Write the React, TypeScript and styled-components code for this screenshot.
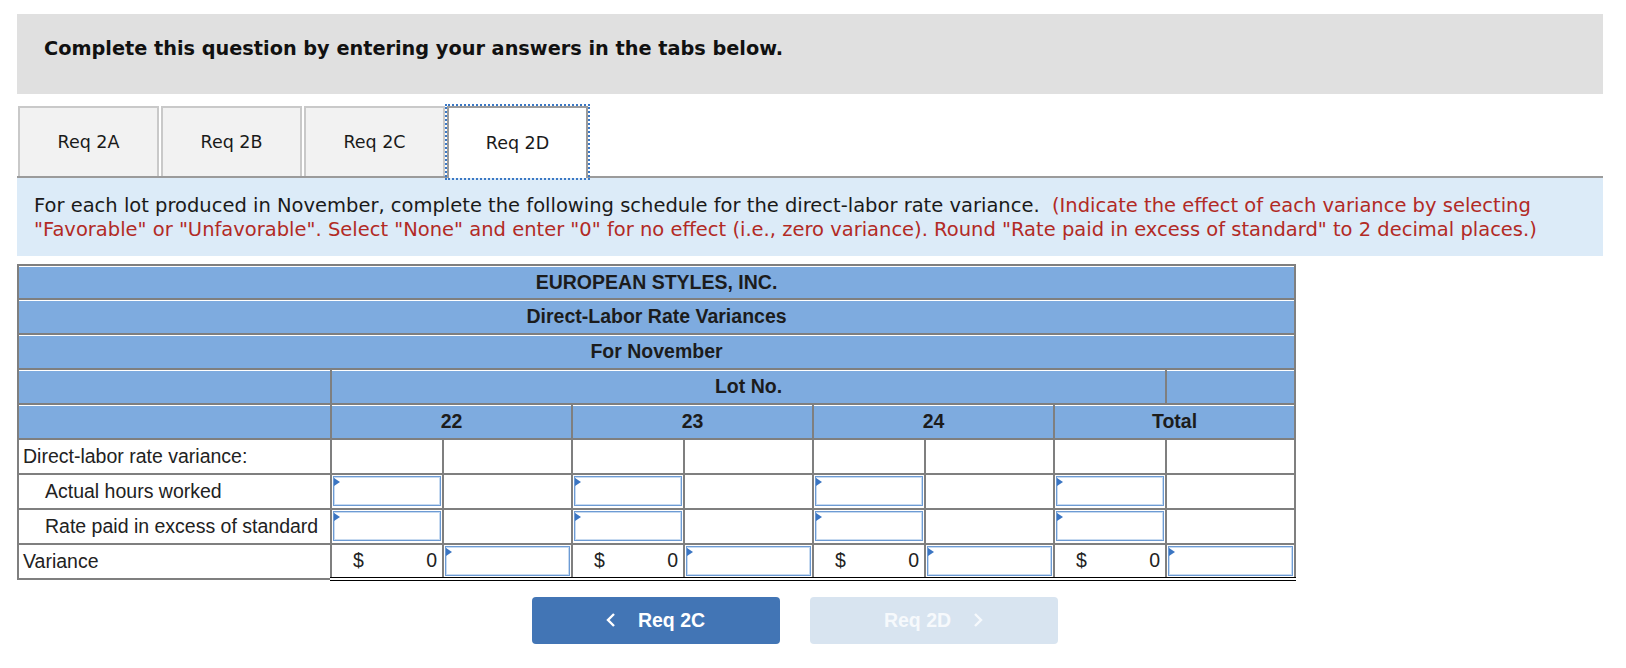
import React from 'react'
import styled, { createGlobalStyle } from 'styled-components'

const GlobalStyle = createGlobalStyle`
  body {
    margin: 0;
    background: #fff;
  }
`

const Page = styled.div`
  width: 1586px;
  padding: 14px 0 20px 17px;
  font-family: 'DejaVu Sans', Verdana, sans-serif;
  color: #1a1a1a;
`

const Banner = styled.div`
  height: 80px;
  box-sizing: border-box;
  background: #e0e0e0;
  padding: 23px 0 0 27px;
  font-size: 19.3px;
  line-height: 23px;
  font-weight: bold;
  color: #111;
`

const TabBar = styled.div`
  display: flex;
  align-items: flex-end;
  gap: 2px;
  margin-top: 12px;
  padding-left: 1px;
  border-bottom: 2px solid #9b9b9b;
`

const Tab = styled.div<{ $active?: boolean }>`
  width: 141px;
  box-sizing: border-box;
  display: flex;
  align-items: center;
  justify-content: center;
  font-size: 17.5px;
  color: #1a1a1a;
  background: ${p => (p.$active ? '#fff' : '#f2f2f2')};
  border: 2px solid ${p => (p.$active ? '#9c9c9c' : '#c9c9c9')};
  border-bottom: none;
  margin-bottom: ${p => (p.$active ? '-2px' : '0')};
  height: ${p => (p.$active ? '72px' : '70px')};
  outline: ${p => (p.$active ? '2px dotted #3b78c4' : 'none')};
  outline-offset: 0;
`

const Instructions = styled.div`
  background: #dcebf8;
  padding: 16px 10px 14px 17px;
  font-size: 19.5px;
  line-height: 23.8px;
  color: #1a1a1a;
`

const Note = styled.span`
  color: #b22a25;
`

const Schedule = styled.table`
  margin-top: 8px;
  width: 1278px;
  border-collapse: collapse;
  table-layout: fixed;
  font-family: 'Liberation Sans', Arial, sans-serif;
  font-size: 19.5px;
  color: #222;

  tr {
    height: 34.9px;
  }
`

const HeadCell = styled.td`
  background: #7eabdf;
  border: 2px solid #7f7f7f;
  box-shadow: inset 0 1px 0 #fff;
  padding: 0 4px;
  text-align: center;
  font-weight: bold;
  color: #1c1c1c;
`

const Label = styled.td<{ $indent?: boolean }>`
  border: 2px solid #7f7f7f;
  padding: 0 0 0 ${p => (p.$indent ? '26px' : '4px')};
  white-space: nowrap;
  background: #fff;
`

const ValueCell = styled.td<{ $sum?: boolean; $underline?: boolean }>`
  border: 2px solid #7f7f7f;
  padding: 1px;
  background: #fff;
  ${p => p.$sum && 'border-top: 2px solid #000;'}
  ${p => p.$underline && 'border-bottom: 4px double #000;'}
`

const InputBox = styled.div`
  position: relative;
  height: 28px;
  border: 1px solid #6d9bd4;
  box-shadow: inset 0 0 0 1px #c7daf0;
  background: #fff;

  &::before {
    content: '';
    position: absolute;
    top: 1px;
    left: 0;
    border-top: 4px solid transparent;
    border-bottom: 4px solid transparent;
    border-left: 6px solid #3b75c2;
  }
`

const Amount = styled.div`
  display: flex;
  justify-content: space-between;
  align-items: center;
  padding: 0 4px 0 20px;
  height: 28px;
`

const NavRow = styled.div`
  display: flex;
  justify-content: center;
  gap: 30px;
  margin-top: 16px;
  padding-right: 31px;
`

const NavButton = styled.div<{ $disabled?: boolean }>`
  width: 248px;
  height: 47px;
  border-radius: 4px;
  display: flex;
  align-items: center;
  justify-content: center;
  gap: 22px;
  font-family: 'Liberation Sans', Arial, sans-serif;
  font-size: 19.5px;
  font-weight: bold;
  background: ${p => (p.$disabled ? '#d8e4f0' : '#4275b5')};
  color: ${p => (p.$disabled ? '#f6f9fc' : '#fff')};
`

const Chevron = ({ dir }: { dir: 'left' | 'right' }) => (
  <svg width="10" height="16" viewBox="0 0 10 16">
    <polyline
      points={dir === 'left' ? '8,2 2,8 8,14' : '2,2 8,8 2,14'}
      fill="none"
      stroke="currentColor"
      strokeWidth="2.4"
    />
  </svg>
)

const lots = ['22', '23', '24']

const InputRow = ({ label }: { label: string }) => (
  <tr>
    <Label $indent>{label}</Label>
    {[0, 1, 2, 3].map(i => (
      <React.Fragment key={i}>
        <ValueCell>
          <InputBox />
        </ValueCell>
        <ValueCell />
      </React.Fragment>
    ))}
  </tr>
)

const App = () => {
  return (
    <Page>
      <GlobalStyle />
      <Banner>Complete this question by entering your answers in the tabs below.</Banner>

      <TabBar>
        <Tab>Req 2A</Tab>
        <Tab>Req 2B</Tab>
        <Tab>Req 2C</Tab>
        <Tab $active>Req 2D</Tab>
      </TabBar>

      <Instructions>
        For each lot produced in November, complete the following schedule for the direct-labor rate variance.&nbsp;{' '}
        <Note>
          (Indicate the effect of each variance by selecting "Favorable" or "Unfavorable". Select "None" and enter "0"
          for no effect (i.e., zero variance). Round "Rate paid in excess of standard" to 2 decimal places.)
        </Note>
      </Instructions>

      <Schedule>
        <colgroup>
          <col style={{ width: 313 }} />
          {[0, 1, 2, 3].map(i => (
            <React.Fragment key={i}>
              <col style={{ width: 112 }} />
              <col style={{ width: 129 }} />
            </React.Fragment>
          ))}
        </colgroup>
        <tbody>
          <tr>
            <HeadCell colSpan={9}>EUROPEAN STYLES, INC.</HeadCell>
          </tr>
          <tr>
            <HeadCell colSpan={9}>Direct-Labor Rate Variances</HeadCell>
          </tr>
          <tr>
            <HeadCell colSpan={9}>For November</HeadCell>
          </tr>
          <tr>
            <HeadCell />
            <HeadCell colSpan={7}>Lot No.</HeadCell>
            <HeadCell />
          </tr>
          <tr>
            <HeadCell />
            {lots.map(l => (
              <HeadCell key={l} colSpan={2}>
                {l}
              </HeadCell>
            ))}
            <HeadCell colSpan={2}>Total</HeadCell>
          </tr>
          <tr>
            <Label>Direct-labor rate variance:</Label>
            {Array.from({ length: 8 }).map((_, i) => (
              <ValueCell key={i} />
            ))}
          </tr>
          <InputRow label="Actual hours worked" />
          <InputRow label="Rate paid in excess of standard" />
          <tr>
            <Label>Variance</Label>
            {[0, 1, 2, 3].map(i => (
              <React.Fragment key={i}>
                <ValueCell $sum $underline>
                  <Amount>
                    <span>$</span>
                    <span>0</span>
                  </Amount>
                </ValueCell>
                <ValueCell $underline>
                  <InputBox />
                </ValueCell>
              </React.Fragment>
            ))}
          </tr>
        </tbody>
      </Schedule>

      <NavRow>
        <NavButton>
          <Chevron dir="left" />
          Req 2C
        </NavButton>
        <NavButton $disabled>
          Req 2D
          <Chevron dir="right" />
        </NavButton>
      </NavRow>
    </Page>
  )
}

export default App
